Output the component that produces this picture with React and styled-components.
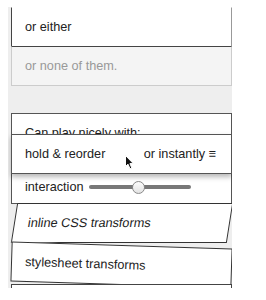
import React from "react";
import styled, { createGlobalStyle, css } from "styled-components";

const GlobalStyle = createGlobalStyle`
	html, body {
		margin: 0;
		padding: 0;
		background: #fff;
	}
	body {
		font-family: "Liberation Sans", Arial, sans-serif;
		font-size: 12.7px;
		color: #222;
	}
`;

const Panel = styled.div`
	margin-left: 8px;
	width: 224px;
	height: 288px;
	overflow: hidden;
	background: linear-gradient(#fff 0 7px, #eeeeee 7px);
	display: flex;
	flex-direction: column;
`;

const Card = styled.div`
	position: relative;
	box-sizing: border-box;
	margin: -1px 0 0 3px;
	padding: 11px 13px;
	line-height: 16px;
	height: 40px;
	background: #fff;
	border: 1px solid #444;
	flex-shrink: 0;

	${(p) =>
		p.$first &&
		css`
			margin-top: 7px;
			border-top-color: #fff;
			border-right-color: #999;
		`}

	${(p) =>
		p.$muted &&
		css`
			background: #f4f4f4;
			color: #999;
			border-color: #ccc;
			border-top-color: #444;
		`}

	${(p) =>
		p.$gap &&
		css`
			margin-top: 27px;
		`}
`;

const GroupCard = styled(Card)`
	height: 91px;
	padding: 11px 13px 7px;
	border-color: #555;
`;

const Title = styled.div`
	line-height: 16px;
`;

const SliderRow = styled.div`
	margin-top: 37px;
	height: 18px;
	display: flex;
	align-items: center;
	gap: 5px;
`;

const Range = styled.input`
	-webkit-appearance: none;
	appearance: none;
	margin: 0;
	width: 102px;
	height: 14px;
	background: transparent;

	&::-webkit-slider-runnable-track {
		height: 4px;
		border-radius: 2px;
		background: #777;
	}
	&::-webkit-slider-thumb {
		-webkit-appearance: none;
		width: 13px;
		height: 13px;
		margin-top: -4.5px;
		border-radius: 50%;
		box-sizing: border-box;
		border: 1px solid #8a8a8a;
		background: linear-gradient(#fdfdfd, #e2e2e2);
	}
`;

const DragGhost = styled.div`
	position: absolute;
	top: 20px;
	left: -1px;
	right: -1px;
	height: 40px;
	box-sizing: border-box;
	padding: 11px 15px 11px 13px;
	line-height: 16px;
	background: #fff;
	border: 1px solid #555;
	box-shadow: 0 3px 5px rgba(0, 0, 0, 0.28);
	display: flex;
	justify-content: space-between;
	z-index: 2;
`;

const Cursor = styled.svg`
	position: absolute;
	left: 113px;
	top: 20px;
`;

const SkewCard = styled(Card)`
	margin: -1px 2px 0 6px;
	transform: skewX(-9deg);
	border-color: #333;
`;

const TiltCard = styled(Card)`
	margin-top: 2px;
	transform: rotate(1.8deg);
	border-color: #333;
`;

const items = [
	{ label: "or either", first: true },
	{ label: "or none of them.", muted: true },
];

export default function App() {
	return (
		<>
			<GlobalStyle />
			<Panel>
				{items.map((item, index) => (
					<Card key={index} $first={item.first} $muted={item.muted}>
						{item.label}
					</Card>
				))}
				<GroupCard $gap>
					<Title>Can play nicely with:</Title>
					<DragGhost>
						<span>hold &amp; reorder</span>
						<span>or instantly ≡</span>
						<Cursor width="10" height="15" viewBox="0 0 10 15">
							<path
								d="M0.5 0.5 L0.5 11.5 L3 9.2 L5 13.8 L6.8 13 L4.9 8.6 L8.3 8.6 Z"
								fill="#111"
								stroke="#fff"
								strokeWidth="1"
							/>
						</Cursor>
					</DragGhost>
					<SliderRow>
						<span>interaction</span>
						<Range type="range" min="0" max="100" defaultValue="49" />
					</SliderRow>
				</GroupCard>
				<SkewCard>inline CSS transforms</SkewCard>
				<TiltCard>stylesheet transforms</TiltCard>
				<Card />
			</Panel>
		</>
	);
}
